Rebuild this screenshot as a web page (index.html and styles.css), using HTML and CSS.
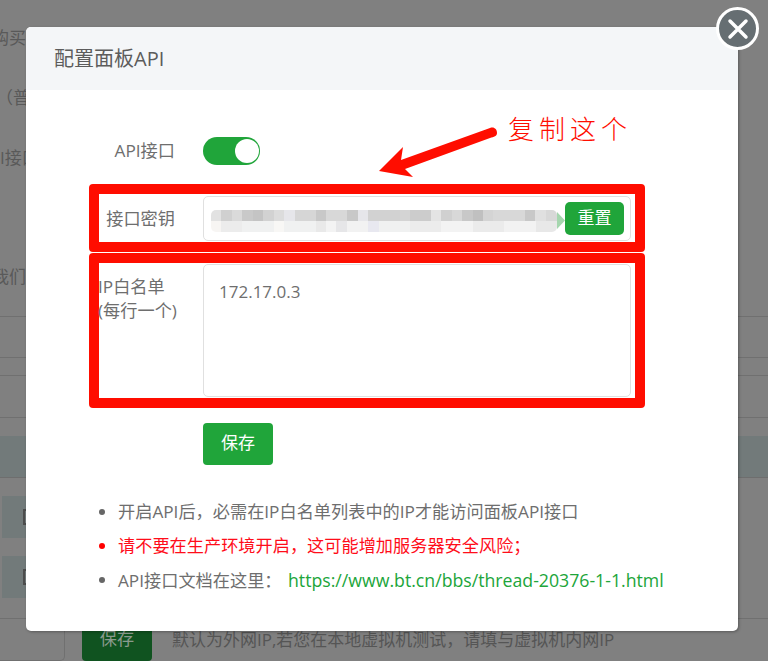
FILE: index.html
```html
<!DOCTYPE html>
<html lang="zh-CN">
<head>
  <meta charset="UTF-8">
  <meta name="viewport" content="width=device-width, initial-scale=1.0">
  <title>配置面板API</title>
  <link rel="stylesheet" href="styles.css">
</head>
<body>

<!-- page behind the dialog, dimmed -->
<div class="page">
  <p class="bg-text first">购买</p>
  <p class="bg-text second">（普</p>
  <p class="bg-text third">I接口</p>
  <p class="bg-text fourth">我们</p>
  <div class="bg-row h42"></div>
  <div class="bg-row h18"></div>
  <div class="bg-row h42"></div>
  <div class="bg-block"></div>
  <div class="bg-cell"><span class="bg-check"></span></div>
  <div class="bg-cell"><span class="bg-check"></span></div>
  <div class="bg-foot">
    <div class="bg-input"></div>
    <div class="bg-save">保存</div>
    <p class="bg-note">默认为外网IP,若您在本地虚拟机测试，请填与虚拟机内网IP</p>
  </div>
</div>

<div class="dialog">
  <div class="dialog-head">配置面板API</div>
  <div class="dialog-body">

    <div class="row switch-row">
      <label class="row-label">API接口</label>
      <div class="switch"><span class="knob"></span></div>
    </div>

    <div class="row key-row">
      <span class="mark"></span>
      <label class="row-label">接口密钥</label>
      <div class="key-box">
        <div class="blur">
          <div class="blur-top"></div>
          <div class="blur-bottom"></div>
        </div>
        <span class="blur-tip"></span>
        <button type="button" class="btn btn-reset">重置</button>
      </div>
    </div>

    <div class="row ip-row">
      <span class="mark"></span>
      <label class="row-label ip-label">IP白名单<br>(每行一个)</label>
      <div class="ip-box">172.17.0.3</div>
    </div>

    <button type="button" class="btn btn-save">保存</button>

    <ul class="tips">
      <li>开启API后，必需在IP白名单列表中的IP才能访问面板API接口</li>
      <li class="danger">请不要在生产环境开启，这可能增加服务器安全风险；</li>
      <li>API接口文档在这里： <a href="#">https://www.bt.cn/bbs/thread-20376-1-1.html</a></li>
    </ul>
  </div>

  <!-- screenshot annotation -->
  <svg class="arrow" width="130" height="70" viewBox="0 0 130 70">
    <path d="M3 53 L27 29 L25 42 L114 10 C118 8.500 121 11 121 15 C121 18 118 19 114 20 L29 51 L37 59 Z" fill="#ff0d00"/>
  </svg>
  <span class="note">复制这个</span>

  <button type="button" class="close">
    <svg width="24" height="24" viewBox="0 0 24 24">
      <path d="M4 4 L20 20 M20 4 L4 20" stroke="#fff" stroke-width="3.500" stroke-linecap="round"/>
    </svg>
  </button>
</div>

</body>
</html>
```

FILE: styles.css
```css
* {
  box-sizing: border-box;
}

body {
  margin: 0;
  height: 661px;
  overflow: hidden;
  background-color: #808080;
  font-family: "Open Sans", "Noto Sans CJK SC", sans-serif;
  color: #6e6e6e;
  font-size: 17.2px;
}

/* dimmed page */
.page {
  display: flex;
  flex-direction: column;
  height: 661px;
  overflow: hidden;
  padding-top: 26px;
}

.bg-text {
  margin: 0;
  height: 24px;
  line-height: 24px;
  font-size: 17px;
  color: #595959;
}

.bg-text.first {
  margin-left: -8px;
}

.bg-text.second {
  margin: 36px 0 0 -4px;
}

.bg-text.third {
  margin-top: 36px;
}

.bg-text.fourth {
  margin: 95px 0 0 -8px;
}

.bg-row {
  border-bottom: 1px solid #707070;
}

.h42 {
  height: 42px;
}

.h18 {
  height: 18px;
}

.bg-row:first-of-type {
  margin-top: 27px;
  border-top: 1px solid #707070;
}

.bg-block {
  height: 42px;
  margin-top: 18px;
  background-color: #727a7a;
  border-bottom: 1px solid #6e6e6e;
}

.bg-cell {
  display: flex;
  align-items: center;
  justify-content: flex-end;
  width: 120px;
  height: 42px;
  margin: 18px 0 0 2px;
  padding-right: 94px;
  background-color: #727a7a;
}

.bg-check {
  width: 5px;
  height: 16px;
  border: 2px solid #4d4d4d;
  border-right: 0;
}

.bg-foot {
  display: flex;
  align-items: flex-start;
  margin-top: 20px;
  border-top: 1px solid #707070;
}

.bg-input {
  width: 65px;
  height: 42px;
  border: 1px solid #707070;
  border-left: 0;
  border-top: 0;
  border-radius: 0 0 5px 0;
}

.bg-save {
  width: 70px;
  height: 42px;
  margin-left: 17px;
  border-radius: 4px;
  background-color: #105320;
  color: #8a9a8d;
  line-height: 40px;
  text-align: center;
}

.bg-note {
  margin: 10px 0 0 20px;
  font-size: 17px;
  line-height: 22px;
  color: #555;
}

/* dialog */
.dialog {
  position: absolute;
  left: 26px;
  top: 27px;
  width: 712px;
  height: 604px;
  border-radius: 5px;
  background-color: #fff;
  box-shadow: 1px 1px 3px rgba(0, 0, 0, 0.3);
}

.dialog-head {
  height: 63px;
  padding-left: 28px;
  border-radius: 5px 5px 0 0;
  background-color: #f4f6f8;
  font-size: 20px;
  line-height: 64px;
  color: #5c5c5c;
}

.dialog-body {
  padding: 47px 0 0 177px;
}

.row {
  position: relative;
  display: flex;
  width: 428px;
}

.row-label {
  position: absolute;
  right: 100%;
  margin-right: 28px;
  white-space: nowrap;
  line-height: 24px;
}

.switch-row {
  align-items: center;
  height: 28px;
}

.switch {
  position: relative;
  width: 57px;
  height: 28px;
  border-radius: 14px;
  background-color: #20a53a;
}

.knob {
  position: absolute;
  top: 2px;
  right: 1px;
  width: 24px;
  height: 24px;
  border-radius: 50%;
  background-color: #fff;
}

.key-row {
  align-items: center;
  margin-top: 31px;
}

.mark {
  position: absolute;
  top: -12px;
  right: -14px;
  bottom: -11px;
  left: -114px;
  border: 10px solid #ff0d00;
  border-radius: 4px;
}

.key-box {
  position: relative;
  display: flex;
  align-items: center;
  justify-content: flex-end;
  width: 100%;
  height: 45px;
  padding-right: 6px;
  border: 1px solid #e0e0e0;
  border-radius: 5px;
  background-color: #fff;
}

.blur {
  position: absolute;
  left: 7px;
  top: 13px;
  width: 346px;
  height: 22px;
  border-radius: 5px;
  overflow: hidden;
}

.blur-top {
  height: 11px;
  background: linear-gradient(90deg,
    #e2e2e2 0 10px, #d0d0d0 0 21px, #dadada 0 31px, #c9c9c9 0 42px, #c4c4c4 0 52px,
    #d2d2d2 0 63px, #dcdcdc 0 73px, #e6e6ea 0 84px, #d6d6d6 0 105px, #c8c8c8 0 115px,
    #d8d8d8 0 136px, #c8c8c8 0 147px, #e6e6ea 0 157px, #d2d2d2 0 189px, #d4d4d4 0 199px,
    #cccccc 0 220px, #e4e4e4 0 230px, #d0d0d0 0 241px, #d8d8d8 0 251px, #c8c8c8 0 262px,
    #c0c0c0 0 272px, #d4d4d4 0 282px, #d8d8d8 0 314px, #c8c8c8 0 324px, #e0e0e0 0 335px, #d8d8d8 0 346px);
}

.blur-bottom {
  height: 11px;
  background: linear-gradient(90deg,
    #f7f5f3 0 10px, #ececec 0 31px, #f0f1f1 0 63px, #f8f7f5 0 73px, #f0f1f1 0 105px,
    #e9e9e9 0 115px, #f3f3f3 0 125px, #e6e6e8 0 136px, #f2f2f2 0 157px, #e8e8f0 0 168px,
    #f0f1f1 0 199px, #ececec 0 230px, #f3f3f3 0 262px, #ebebeb 0 293px, #f2f2f2 0 325px, #e8e8e8 0 346px);
}

.blur-tip {
  position: absolute;
  left: 353px;
  top: 15px;
  width: 8px;
  height: 17px;
  background-color: #a5d6ae;
  clip-path: polygon(0 0, 100% 50%, 0 100%);
}

.btn {
  border: 0;
  border-radius: 5px;
  background-color: #20a53a;
  color: #fff;
  font-family: inherit;
  font-size: 17px;
  line-height: 24px;
  padding: 0 0 2px;
}

.btn-reset {
  position: relative;
  width: 59px;
  height: 33px;
}

.ip-row {
  margin-top: 23px;
}

.ip-row .mark {
  top: -11px;
  border-top-width: 10px;
}

.ip-label {
  top: 11px;
  right: auto;
  left: -105px;
  margin: 0;
}

.ip-box {
  width: 100%;
  height: 133px;
  padding: 15px;
  border: 1px solid #e0e0e0;
  border-radius: 5px;
  font-size: 17px;
  line-height: 24px;
}

.btn-save {
  display: block;
  width: 70px;
  height: 42px;
  margin-top: 26px;
  border-radius: 4px;
}

.tips {
  margin: 30px 0 0 -85px;
  padding: 0;
  list-style: none;
}

.tips li {
  position: relative;
  height: 34px;
  line-height: 34px;
  white-space: nowrap;
}

.tips li::before {
  content: "";
  position: absolute;
  left: -19px;
  top: 14px;
  width: 6px;
  height: 6px;
  border-radius: 50%;
  background-color: #666;
}

.tips .danger {
  color: #ff0d1a;
}

.tips .danger::before {
  background-color: #ff0000;
}

.tips a {
  margin-left: 2px;
  font-size: 17.7px;
  color: #20a53a;
  text-decoration: none;
}

/* overlays */
.arrow {
  position: absolute;
  left: 350px;
  top: 91px;
}

.note {
  position: absolute;
  left: 482px;
  top: 84px;
  font-size: 26px;
  font-weight: 300;
  line-height: 36px;
  letter-spacing: 5px;
  color: #ff0d00;
  white-space: nowrap;
}

.close {
  position: absolute;
  right: -21px;
  top: -20px;
  display: flex;
  align-items: center;
  justify-content: center;
  width: 43px;
  height: 43px;
  padding: 0;
  border: 3px solid #fff;
  border-radius: 50%;
  background-color: #666e72;
}
```
